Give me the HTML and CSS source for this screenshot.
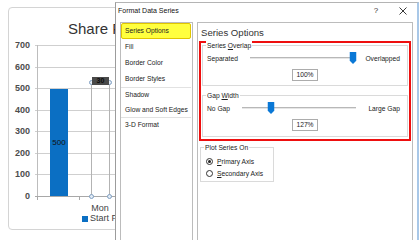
FILE: index.html
```html
<!DOCTYPE html>
<html>
<head>
<meta charset="utf-8">
<link rel="stylesheet" href="styles.css">
</head>
<body>
<div class="screen">
  <div class="sheet">
    <div class="chart">
      <div class="chart-title">Share Price</div>
      <div class="plot-row">
        <div class="yaxis">
          <span>700</span><span>600</span><span>500</span><span>400</span><span>300</span><span>200</span><span>100</span><span>0</span>
        </div>
        <div class="plot">
          <div class="grid"><i></i><i></i><i></i><i></i><i></i><i></i><i></i><i class="base"></i></div>
          <div class="axis-y"></div>
          <div class="tick t1"></div>
          <div class="tick t2"></div>
          <div class="bar">500</div>
          <div class="sel">
            <span class="h tl"></span><span class="h tr"></span><span class="h bl"></span><span class="h br"></span>
          </div>
          <div class="dlabel">30</div>
        </div>
      </div>
      <div class="xlabels"><span></span><span>Mon</span></div>
      <div class="legend"><span class="swatch"></span><span>Start Price</span></div>
    </div>
  </div>

  <div class="dialog">
    <div class="titlebar">
      <span class="title">Format Data Series</span>
      <span class="help">?</span>
      <svg class="close" width="8" height="8" viewBox="0 0 8 8"><path d="M0.5 0.5 L7.5 7.5 M7.5 0.5 L0.5 7.5" stroke="#222" stroke-width="0.9" fill="none"/></svg>
    </div>
    <div class="body">
      <div class="list">
        <div class="item selected">Series Options</div>
        <div class="item">Fill</div>
        <div class="item">Border Color</div>
        <div class="item">Border Styles</div>
        <div class="item short sep">Shadow</div>
        <div class="item short">Glow and Soft Edges</div>
        <div class="item short sep">3-D Format</div>
      </div>
      <div class="panel">
        <div class="panel-head">Series Options</div>
        <div class="redbox">
          <div class="group g1">
            <div class="glabel">Series <u>O</u>verlap</div>
            <div class="srow">
              <span>Separated</span>
              <div class="track"><svg class="thumb" style="left:100%" width="7" height="12" viewBox="0 0 7 12"><path d="M0 0 H7 V8.5 L3.5 12 L0 8.5 Z" fill="#0a78d6"/></svg></div>
              <span>Overlapped</span>
            </div>
            <div class="val">100%</div>
          </div>
          <div class="group g2">
            <div class="glabel">Gap <u>W</u>idth</div>
            <div class="srow">
              <span>No Gap</span>
              <div class="track"><svg class="thumb" style="left:25.4%" width="7" height="12" viewBox="0 0 7 12"><path d="M0 0 H7 V8.5 L3.5 12 L0 8.5 Z" fill="#0a78d6"/></svg></div>
              <span>Large Gap</span>
            </div>
            <div class="val">127%</div>
          </div>
        </div>
        <div class="group g3">
          <div class="glabel">Plot Series On</div>
          <div class="radio first"><span class="dot on"></span><span><u>P</u>rimary Axis</span></div>
          <div class="radio"><span class="dot"></span><span><u>S</u>econdary Axis</span></div>
        </div>
      </div>
    </div>
  </div>
</div>
</body>
</html>
```

FILE: styles.css
```css
html, body {
  margin: 0;
  padding: 0;
}
body {
  width: 420px;
  height: 240px;
  overflow: hidden;
  background: #ffffff;
  font-family: "Liberation Sans", Arial, sans-serif;
  color: #1a1a1a;
}
.screen {
  display: flex;
  height: 240px;
}

/* ---------- chart sheet ---------- */
.sheet {
  flex: none;
  width: 115px;
  height: 240px;
  overflow: hidden;
}
.chart {
  margin: 7px 0 0 8px;
  width: 220px;
  height: 223px;
  box-sizing: border-box;
  border: 1px solid #d4d4d4;
  border-radius: 4px;
}
.chart-title {
  height: 37px;
  box-sizing: border-box;
  padding: 12px 0 0 59px;
  font-size: 15px;
  line-height: 18px;
  color: #333;
  white-space: nowrap;
}
.plot-row {
  display: flex;
  height: 152px;
}
.yaxis {
  flex: none;
  width: 21px;
  height: 161px;
  margin: -5px 5px 0 0;
  display: flex;
  flex-direction: column;
  justify-content: space-between;
  align-items: flex-end;
  font-size: 9px;
  line-height: 10px;
  font-weight: bold;
  color: #4d4d4d;
}
.plot {
  position: relative;
  width: 180px;
  height: 152px;
  flex: none;
}
.grid {
  height: 152px;
  display: flex;
  flex-direction: column;
  justify-content: space-between;
}
.grid i {
  display: block;
  height: 1px;
  background: #cfcfcf;
}
.grid i.base {
  background: #a8a8a8;
}
.axis-y {
  position: absolute;
  left: 2px;
  top: 0;
  bottom: 0;
  width: 1px;
  background: #bdbdbd;
}
.tick {
  position: absolute;
  bottom: -3px;
  width: 1px;
  height: 4px;
  background: #a8a8a8;
}
.tick.t1 { left: 2px; }
.tick.t2 { left: 44px; }
.bar {
  position: absolute;
  left: 15px;
  bottom: 1px;
  width: 18px;
  height: 107px;
  background: #0b6fc3;
  font-size: 8px;
  color: #111;
  display: flex;
  align-items: center;
  justify-content: center;
}
.sel {
  position: absolute;
  left: 56px;
  top: 37px;
  width: 19px;
  height: 114px;
  box-sizing: border-box;
  border: 1px solid #b3b3b3;
  border-bottom: none;
}
.h {
  position: absolute;
  width: 5px;
  height: 5px;
  box-sizing: border-box;
  border-radius: 50%;
  border: 1px solid #7f9fc2;
  background: #e3ecf6;
}
.h.tl { left: -3px; top: -3px; }
.h.tr { right: -3px; top: -3px; }
.h.bl { left: -3px; bottom: -3px; }
.h.br { right: -3px; bottom: -3px; }
.dlabel {
  position: absolute;
  left: 57px;
  top: 31px;
  width: 17px;
  height: 8px;
  background: #4a4a4a;
  border-top: 1px solid #fff;
  font-size: 7px;
  font-weight: bold;
  line-height: 8px;
  text-align: center;
  color: #0c0c0c;
}
.xlabels {
  display: flex;
  margin: 5px 0 0 28px;
  height: 12px;
  font-size: 9px;
  line-height: 12px;
  color: #444;
}
.xlabels span {
  width: 42px;
  text-align: center;
}
.legend {
  display: flex;
  align-items: center;
  gap: 2px;
  margin-left: 73px;
  height: 9px;
  font-size: 9px;
  line-height: 9px;
  color: #444;
  white-space: nowrap;
}
.swatch {
  width: 6px;
  height: 6px;
  background: #0b6fc3;
  flex: none;
}

/* ---------- dialog ---------- */
.dialog {
  flex: none;
  width: 304px;
  height: 238px;
  margin-top: 2px;
  box-sizing: border-box;
  border-left: 1px solid #9c9c9c;
  border-top: 1px solid #b4b4b4;
  border-right: 2px solid #a9c8e8;
  background: #fff;
  display: flex;
  flex-direction: column;
  font-size: 6.7px;
}
.titlebar {
  height: 19px;
  flex: none;
  box-sizing: border-box;
  display: flex;
  align-items: flex-start;
  padding: 3px 0 0 2px;
  line-height: 9px;
  font-size: 7px;
  color: #111;
}
.title {
  flex: 1;
}
.help {
  width: 10px;
  text-align: center;
  font-size: 8px;
  color: #333;
}
.close {
  margin: 0.5px 10px 0 18px;
}
.body {
  flex: 1;
  display: flex;
  gap: 4px;
  padding: 0 4px;
  min-height: 0;
}
.list {
  flex: none;
  width: 73px;
  box-sizing: border-box;
  border: 1px solid #bcbcbc;
  border-bottom: none;
  padding: 0 1px 0 0;
}
.item {
  height: 16px;
  box-sizing: border-box;
  padding-left: 4px;
  line-height: 16px;
  color: #222;
  white-space: nowrap;
}
.item.short {
  height: 15px;
  line-height: 15px;
}
.item.sep {
  border-top: 1px solid #e2e2e2;
  line-height: 14px;
}
.item.selected {
  background: #ffff3e;
  border: 1px solid #e0c600;
  border-radius: 2px;
  padding-left: 3px;
  line-height: 14px;
  height: 16px;
}
.panel {
  flex: none;
  width: 216px;
  box-sizing: border-box;
  border: 1px solid #bcbcbc;
  border-bottom: none;
}
.panel-head {
  margin: 4px 0 0 3px;
  font-size: 9.6px;
  line-height: 12px;
  color: #333;
}
.redbox {
  margin: 2px 1px 0 1px;
  border: 2px solid #ee0f0f;
  padding: 2px 1px;
}
.group {
  border: 1px solid #dadada;
}
.glabel {
  width: fit-content;
  margin: -5px 0 0 3px;
  padding: 0 1px;
  background: #fff;
  line-height: 9px;
  color: #222;
}
.g1 { padding-bottom: 4px; }
.g2 { margin-top: 9px; padding-bottom: 5px; }
.srow {
  display: flex;
  align-items: center;
  gap: 12px;
  height: 12px;
  margin-top: 2px;
  padding: 0 7px 0 4px;
  color: #222;
  white-space: nowrap;
}
.track {
  position: relative;
  flex: 1;
  height: 1px;
  border-top: 1px solid #b8b8b8;
  background: #e6e6e6;
}
.thumb {
  position: absolute;
  top: -6px;
  transform: translateX(-50%);
}
.val {
  width: 26px;
  height: 12px;
  box-sizing: border-box;
  margin: 5px auto 0;
  border: 1px solid #acacac;
  text-align: center;
  line-height: 10px;
  color: #222;
}
.g3 {
  width: 74px;
  box-sizing: border-box;
  margin: 6px 0 0 2px;
  padding-bottom: 2px;
}
.radio {
  display: flex;
  align-items: center;
  gap: 4px;
  height: 12px;
  padding-left: 5px;
  color: #222;
  white-space: nowrap;
}
.radio.first {
  margin-top: 3px;
}
.dot {
  width: 7px;
  height: 7px;
  box-sizing: border-box;
  border: 1px solid #333;
  border-radius: 50%;
  display: flex;
  align-items: center;
  justify-content: center;
  flex: none;
}
.dot.on::after {
  content: "";
  width: 3px;
  height: 3px;
  border-radius: 50%;
  background: #222;
}
```
